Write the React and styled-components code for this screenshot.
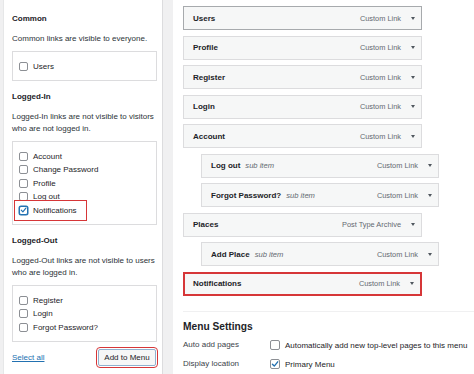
import React from 'react';
import styled, { createGlobalStyle } from 'styled-components';

const Global = createGlobalStyle`
  html, body { margin: 0; padding: 0; }
  body {
    background: #f0f0f1;
    font-family: "Liberation Sans", Arial, sans-serif;
    color: #1d2327;
    width: 474px;
    height: 374px;
    overflow: hidden;
  }
  * { box-sizing: border-box; }
`;

const Page = styled.div`
  display: flex;
  height: 374px;
  overflow: hidden;
`;

const Sidebar = styled.aside`
  width: 160px;
  flex: none;
  margin-left: 3px;
  background: #fff;
  border-left: 1px solid #e6e7e8;
  border-right: 1px solid #dcdcde;
  padding: 13px 5px 0 8px;
  display: flex;
  flex-direction: column;
`;

const SectionTitle = styled.div`
  font-size: 8px;
  font-weight: 700;
  line-height: 12px;
  color: #1d2327;
  margin-top: ${p => (p.$first ? 0 : 10)}px;
`;

const Desc = styled.p`
  margin: 8px 0 0;
  font-size: 8px;
  line-height: 12px;
  color: #2c3338;
`;

const CheckBox = styled.div`
  margin-top: 6px;
  border: 1px solid #dcdcde;
  padding: 7.25px 6px;
  display: flex;
  flex-direction: column;
`;

const CheckItem = styled.label`
  position: relative;
  display: flex;
  align-items: center;
  gap: 5px;
  height: 13.5px;
  width: fit-content;
  font-size: 8px;
  color: #1d2327;
  ${p => p.$highlight && `
    &::after {
      content: "";
      position: absolute;
      left: -5px;
      right: -10px;
      top: -3.5px;
      bottom: -4px;
      border: 1.5px solid #d63638;
    }
  `}
`;

const Box = styled.span`
  width: ${p => p.$size || 9}px;
  height: ${p => p.$size || 9}px;
  flex: none;
  border: 1px solid ${p => (p.$focus ? '#2271b1' : '#8c8f94')};
  border-radius: 2px;
  background: #fff;
  display: flex;
  align-items: center;
  justify-content: center;
  ${p => p.$focus && 'box-shadow: 0 0 0 0.5px #2271b1;'}
`;

const Check = ({ checked, focus, size }) => (
  <Box $focus={focus} $size={size}>
    {checked && (
      <svg width="8" height="8" viewBox="0 0 10 10">
        <path d="M1.8 5.2 L4.1 7.6 L8.4 2.3" fill="none" stroke="#2271b1" strokeWidth="1.7" strokeLinecap="round" strokeLinejoin="round" />
      </svg>
    )}
  </Box>
);

const ActionRow = styled.div`
  margin-top: 7px;
  display: flex;
  align-items: center;
  justify-content: space-between;
  padding-right: 1px;
`;

const SelectAll = styled.a`
  font-size: 8px;
  color: #2271b1;
  text-decoration: underline;
  cursor: pointer;
`;

const AddButton = styled.button`
  height: 17px;
  width: 58px;
  padding: 0;
  font-family: inherit;
  font-size: 8px;
  color: #1d2327;
  background: #f6f7f7;
  border: 1px solid #8fb1cf;
  border-radius: 2px;
  outline: 1.5px solid #d63638;
  outline-offset: 1.5px;
`;

const Main = styled.main`
  flex: 1;
  margin-left: 10px;
  background: #fff;
  padding: 6px 0 0 10px;
  display: flex;
  flex-direction: column;
`;

const MenuList = styled.div`
  display: flex;
  flex-direction: column;
  gap: 5.5px;
`;

const MenuItem = styled.div`
  height: 24px;
  width: ${p => (p.$sub ? 238 : 239)}px;
  margin-left: ${p => (p.$sub ? 18 : 0)}px;
  background: #f6f7f7;
  border: ${p => (p.$highlight ? '2px solid #d63638' : `1px solid ${p.$active ? '#a7aaad' : '#dcdcde'}`)};
  padding: 0 6px 0 ${p => (p.$highlight ? 8 : 9)}px;
  display: flex;
  align-items: center;
`;

const ItemTitle = styled.span`
  font-size: 8px;
  font-weight: 700;
  color: #1d2327;
`;

const SubLabel = styled.span`
  font-size: 7.6px;
  font-style: italic;
  color: #646970;
  margin-left: 5px;
`;

const ItemType = styled.span`
  margin-left: auto;
  font-size: 7.4px;
  color: #646970;
`;

const Arrow = styled.span`
  margin-left: 10px;
  width: 0;
  height: 0;
  border-left: 2.5px solid transparent;
  border-right: 2.5px solid transparent;
  border-top: 3.5px solid #50575e;
`;

const Separator = styled.hr`
  margin: 15.5px 0 0;
  border: 0;
  border-top: 1px solid #f0f0f1;
`;

const SettingsTitle = styled.h3`
  margin: 8px 0 0;
  font-size: 10.2px;
  font-weight: 600;
  line-height: 14px;
  color: #1d2327;
`;

const SettingRow = styled.div`
  display: grid;
  grid-template-columns: 87px 1fr;
  margin-top: ${p => p.$mt}px;
`;

const SettingLabel = styled.div`
  font-size: 8px;
  line-height: 14px;
  color: #3c434a;
`;

const Options = styled.div`
  display: flex;
  flex-direction: column;
  gap: 4px;
`;

const Option = styled.label`
  display: flex;
  align-items: center;
  gap: 5px;
  height: 14px;
  font-size: 8px;
  color: #1d2327;
`;

const items = [
  { title: 'Users', type: 'Custom Link', active: true },
  { title: 'Profile', type: 'Custom Link' },
  { title: 'Register', type: 'Custom Link' },
  { title: 'Login', type: 'Custom Link' },
  { title: 'Account', type: 'Custom Link' },
  { title: 'Log out', type: 'Custom Link', sub: true },
  { title: 'Forgot Password?', type: 'Custom Link', sub: true },
  { title: 'Places', type: 'Post Type Archive' },
  { title: 'Add Place', type: 'Custom Link', sub: true },
  { title: 'Notifications', type: 'Custom Link', highlight: true },
];

export default function App() {
  return (
    <>
      <Global />
      <Page>
        <Sidebar>
          <SectionTitle $first>Common</SectionTitle>
          <Desc>Common links are visible to everyone.</Desc>
          <CheckBox>
            <CheckItem><Check />Users</CheckItem>
          </CheckBox>

          <SectionTitle>Logged-In</SectionTitle>
          <Desc>Logged-In links are not visible to visitors who are not logged in.</Desc>
          <CheckBox>
            <CheckItem><Check />Account</CheckItem>
            <CheckItem><Check />Change Password</CheckItem>
            <CheckItem><Check />Profile</CheckItem>
            <CheckItem><Check />Log out</CheckItem>
            <CheckItem $highlight><Check checked focus />Notifications</CheckItem>
          </CheckBox>

          <SectionTitle>Logged-Out</SectionTitle>
          <Desc>Logged-Out links are not visible to users who are logged in.</Desc>
          <CheckBox>
            <CheckItem><Check />Register</CheckItem>
            <CheckItem><Check />Login</CheckItem>
            <CheckItem><Check />Forgot Password?</CheckItem>
          </CheckBox>

          <ActionRow>
            <SelectAll>Select all</SelectAll>
            <AddButton>Add to Menu</AddButton>
          </ActionRow>
        </Sidebar>

        <Main>
          <MenuList>
            {items.map(it => (
              <MenuItem key={it.title} $sub={it.sub} $active={it.active} $highlight={it.highlight}>
                <ItemTitle>{it.title}</ItemTitle>
                {it.sub && <SubLabel>sub item</SubLabel>}
                <ItemType>{it.type}</ItemType>
                <Arrow />
              </MenuItem>
            ))}
          </MenuList>

          <Separator />
          <SettingsTitle>Menu Settings</SettingsTitle>
          <SettingRow $mt={4}>
            <SettingLabel>Auto add pages</SettingLabel>
            <Options>
              <Option><Check size={10} />Automatically add new top-level pages to this menu</Option>
            </Options>
          </SettingRow>
          <SettingRow $mt={5}>
            <SettingLabel>Display location</SettingLabel>
            <Options>
              <Option><Check size={10} checked />Primary Menu</Option>
              <Option><Check size={10} /></Option>
            </Options>
          </SettingRow>
        </Main>
      </Page>
    </>
  );
}
